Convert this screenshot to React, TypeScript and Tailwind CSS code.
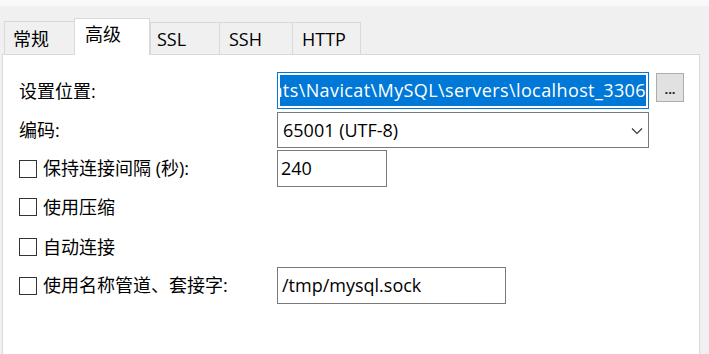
import React from "react";

function Checkbox() {
  return <span className="w-[18px] h-[18px] border-[1.5px] border-[#333] bg-white mr-[6px] shrink-0" />;
}

export default function App() {
  return (
    <div className="w-[709px] h-[354px] overflow-hidden bg-[#f0f0f0] text-black text-[18px] font-['Open_Sans','Noto_Sans_CJK_SC',sans-serif]">
      {/* top strip */}
      <div className="h-[6px] bg-[#f9f9f9]" />

      {/* Tabs */}
      <div className="flex items-end h-[48px] pl-[4px]">
        <div className="w-[71px] h-[33px] border border-b-0 border-[#d9d9d9] bg-[#f0f0f0] pl-[8px] pt-[8px] leading-[18px]">
          常规
        </div>
        <div className="relative z-10 -ml-[1px] -mb-[1px] w-[76px] h-[37px] border border-b-0 border-[#d9d9d9] bg-white pl-[10px] pt-[6px] leading-[18px]">
          高级
        </div>
        <div className="w-[70px] h-[32px] border border-b-0 border-[#d9d9d9] bg-[#f0f0f0] pl-[6px] pt-[7px] leading-[18px]">
          SSL
        </div>
        <div className="-ml-[1px] w-[74px] h-[32px] border border-b-0 border-[#d9d9d9] bg-[#f0f0f0] pl-[9px] pt-[7px] leading-[18px]">
          SSH
        </div>
        <div className="-ml-[1px] w-[69px] h-[32px] border border-b-0 border-[#d9d9d9] bg-[#f0f0f0] pl-[9px] pt-[7px] leading-[18px]">
          HTTP
        </div>
      </div>

      {/* Panel */}
      <div className="ml-[2px] w-[698px] h-[310px] border border-[#d9d9d9] bg-white pt-[17px] pl-[16px]">
        {/* 设置位置 */}
        <div className="flex items-start h-[37px]">
          <div className="w-[258px] h-full flex items-center pt-[2px]">设置位置:</div>
          <div className="w-[372px] h-[37px] border border-[#0078d7] p-[2px] bg-white">
            <div className="h-full bg-[#0078d7] text-white flex items-center justify-end overflow-hidden whitespace-nowrap tracking-[0.4px]">
              C:\Users\Administrator\Documents\Navicat\MySQL\servers\localhost_3306
            </div>
          </div>
          <div className="ml-[7px] mt-[1px] w-[28px] h-[29px] bg-[#e1e1e1] border border-[#adadad] flex items-center justify-center text-[13px] font-bold text-[#222] leading-none pt-[4px]">
            ...
          </div>
        </div>

        {/* 编码 */}
        <div className="flex items-center mt-[3px] h-[36px]">
          <div className="w-[258px] flex items-center">编码:</div>
          <div className="w-[372px] h-full border border-[#7a7a7a] flex items-center justify-between pl-[5px] pr-[5px]">
            <span>65001 (UTF-8)</span>
            <svg width="12" height="8" viewBox="0 0 12 8" className="mt-[1px]">
              <path d="M1 1.5 L6 6.5 L11 1.5" fill="none" stroke="#333" strokeWidth="1.1" />
            </svg>
          </div>
        </div>

        {/* 保持连接间隔 */}
        <div className="flex items-center mt-[2px] h-[37px]">
          <div className="w-[258px] flex items-center">
            <Checkbox />
            <span>保持连接间隔 (秒):</span>
          </div>
          <div className="w-[110px] h-full border border-[#7a7a7a] flex items-center pl-[3px]">240</div>
        </div>

        {/* 使用压缩 */}
        <div className="flex items-center h-[40px]">
          <Checkbox />
          <span>使用压缩</span>
        </div>

        {/* 自动连接 */}
        <div className="flex items-center h-[40px]">
          <Checkbox />
          <span>自动连接</span>
        </div>

        {/* 命名管道 */}
        <div className="flex items-center h-[37px]">
          <div className="w-[258px] flex items-center">
            <Checkbox />
            <span>使用名称管道、套接字:</span>
          </div>
          <div className="w-[229px] h-full border border-[#7a7a7a] flex items-center pl-[4px]">/tmp/mysql.sock</div>
        </div>
      </div>
    </div>
  );
}
